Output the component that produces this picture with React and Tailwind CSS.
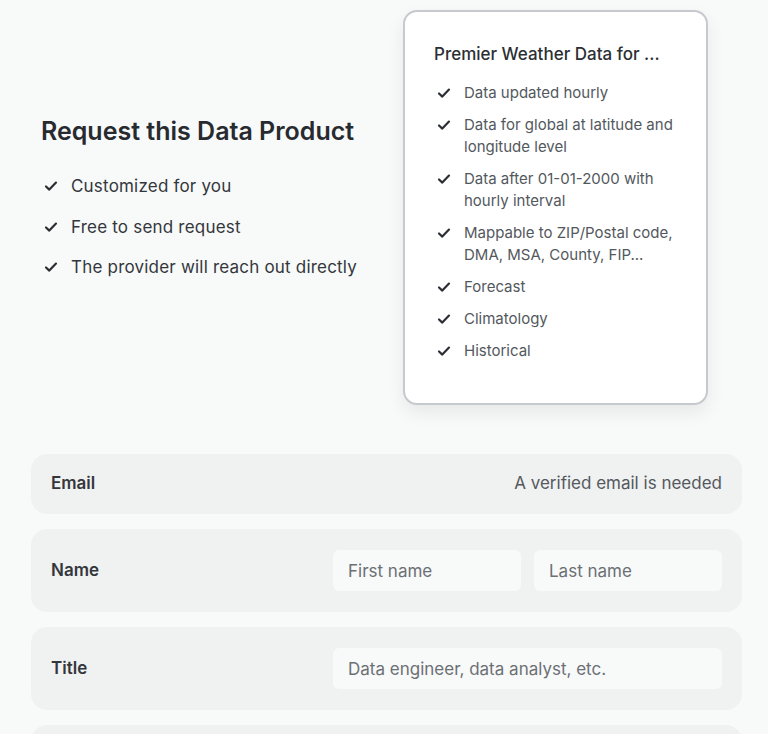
import React from "react";

const Check = ({ className = "" }) => (
  <svg viewBox="0 0 14 14" className={className} fill="none" stroke="currentColor" strokeWidth="2.2" strokeLinecap="round" strokeLinejoin="round">
    <path d="M2 7.5 L5.3 10.6 L12 3.6" />
  </svg>
);

const cardItems = [
  ["Data updated hourly"],
  ["Data for global at latitude and", "longitude level"],
  ["Data after 01-01-2000 with", "hourly interval"],
  ["Mappable to ZIP/Postal code,", "DMA, MSA, County, FIP..."],
  ["Forecast"],
  ["Climatology"],
  ["Historical"],
];

const leftItems = ["Customized for you", "Free to send request", "The provider will reach out directly"];

export default function App() {
  return (
    <div
      className="min-h-[734px] w-[768px] bg-[#f8f9f9] text-[#2b2f34] overflow-hidden"
      style={{ fontFamily: "Inter, 'Noto Sans', sans-serif" }}
    >
      <div className="flex items-start pt-[10px] pl-[41px]">
        <div className="w-[362px] pt-[105px]">
          <h1 className="text-[25px] leading-[32px] font-semibold text-[#272b30]">
            Request this Data Product
          </h1>
          <ul className="mt-[27px] flex flex-col gap-[16.5px]">
            {leftItems.map((t) => (
              <li key={t} className="flex items-center gap-[13px] text-[17px] leading-[24px] tracking-[0.2px] text-[#33373c]">
                <Check className="w-[14px] h-[14px] ml-[3px] text-[#2b2f34]" />
                <span>{t}</span>
              </li>
            ))}
          </ul>
        </div>
        <div className="w-[305px] h-[395px] bg-white border-2 border-[#c6c9cd] rounded-[14px] shadow-[0_8px_18px_rgba(0,0,0,0.07)] pl-[29px] pr-[12px] pt-[30px]">
          <div className="text-[17px] leading-[24px] font-medium text-[#2b2f34]">Premier Weather Data for ...</div>
          <ul className="mt-[16px] flex flex-col gap-[10px]">
            {cardItems.map((lines) => (
              <li key={lines[0]} className="flex items-start gap-[13px] text-[15px] leading-[22px] text-[#53585d]">
                <Check className="w-[14px] h-[14px] mt-[4px] ml-[3px] shrink-0 text-[#2b2f34]" />
                <span className="whitespace-nowrap">
                  {lines.map((l, i) => (
                    <React.Fragment key={i}>
                      {i > 0 && <br />}
                      {l}
                    </React.Fragment>
                  ))}
                </span>
              </li>
            ))}
          </ul>
        </div>
      </div>

      <div className="mt-[49px] px-[31px] mr-[-5px] flex flex-col gap-[15px]">
        <div className="h-[60px] rounded-[16px] bg-[#f0f1f1] flex items-center justify-between px-[20px]">
          <span className="text-[17px] font-semibold text-[#33373c]">Email</span>
          <span className="text-[17px] text-[#55595e]">A verified email is needed</span>
        </div>
        <div className="h-[83px] rounded-[16px] bg-[#f0f1f1] flex items-center justify-between pl-[20px] pr-[20px]">
          <span className="text-[17px] font-semibold text-[#33373c]">Name</span>
          <div className="flex gap-[13px]">
            <input
              placeholder="First name"
              className="w-[188px] h-[41px] rounded-[6px] bg-[#f8f9f9] px-[15px] text-[17px] outline-none placeholder:text-[#6b7075]"
            />
            <input
              placeholder="Last name"
              className="w-[188px] h-[41px] rounded-[6px] bg-[#f8f9f9] px-[15px] text-[17px] outline-none placeholder:text-[#6b7075]"
            />
          </div>
        </div>
        <div className="h-[83px] rounded-[16px] bg-[#f0f1f1] flex items-center justify-between pl-[20px] pr-[20px]">
          <span className="text-[17px] font-semibold text-[#33373c]">Title</span>
          <input
            placeholder="Data engineer, data analyst, etc."
            className="w-[389px] h-[41px] rounded-[6px] bg-[#f8f9f9] px-[15px] text-[17px] outline-none placeholder:text-[#6b7075]"
          />
        </div>
        <div className="h-[83px] rounded-[16px] bg-[#f0f1f1]" />
      </div>
    </div>
  );
}
